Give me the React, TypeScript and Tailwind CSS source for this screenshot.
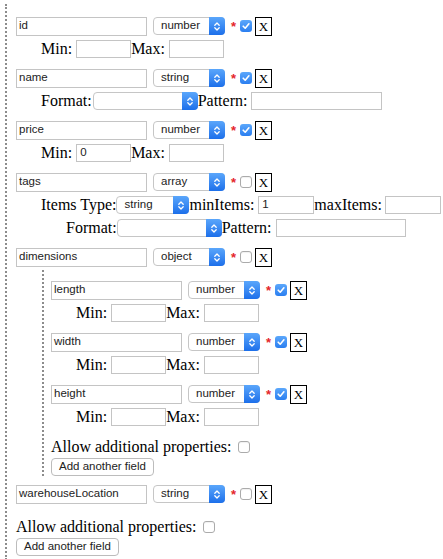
import React from "react";

const sans = "font-['Liberation_Sans',Arial,sans-serif]";

function TextBox({ value = "", w }: { value?: string; w: string }) {
  return (
    <div
      className={`${w} h-[19px] shrink-0 border border-[#c4c4c4] bg-white pl-[2px] flex items-center text-[11.5px] text-[#222] leading-none ${sans}`}
    >
      {value}
    </div>
  );
}

function SmallBox({ value = "", w }: { value?: string; w: string }) {
  return (
    <div
      className={`${w} h-[18px] shrink-0 border border-[#c4c4c4] bg-white pl-[3px] flex items-center text-[11.5px] text-[#222] leading-none ${sans}`}
    >
      {value}
    </div>
  );
}

function Select({ value = "", w, className = "" }: { value?: string; w: string; className?: string }) {
  return (
    <div
      className={`relative ${w} h-[18px] shrink-0 rounded-[4px] border border-[#c6c6c6] bg-white flex items-center text-[11.5px] text-[#222] leading-none ${sans} ${className}`}
    >
      <span className="pl-[7px]">{value}</span>
      <div className="absolute right-[-1px] top-[-1px] bottom-[-1px] w-[16px] rounded-r-[4px] bg-gradient-to-b from-[#5aa6fb] to-[#1c6fea] flex items-center justify-center">
        <svg width="8" height="11" viewBox="0 0 8 11" fill="none">
          <path d="M1.8 4.2 L4 2 L6.2 4.2" stroke="white" strokeWidth="1.3" strokeLinecap="round" strokeLinejoin="round" />
          <path d="M1.8 6.8 L4 9 L6.2 6.8" stroke="white" strokeWidth="1.3" strokeLinecap="round" strokeLinejoin="round" />
        </svg>
      </div>
    </div>
  );
}

function Check({ checked, className = "" }: { checked: boolean; className?: string }) {
  if (checked) {
    return (
      <div
        className={`w-[12px] h-[12px] shrink-0 rounded-[3px] bg-gradient-to-b from-[#5ba7fb] to-[#2a7ef0] flex items-center justify-center ${className}`}
      >
        <svg width="10" height="10" viewBox="0 0 10 10" fill="none">
          <path d="M2.2 5.2 L4.2 7.2 L7.9 2.8" stroke="white" strokeWidth="1.6" strokeLinecap="round" strokeLinejoin="round" />
        </svg>
      </div>
    );
  }
  return (
    <div
      className={`w-[12px] h-[12px] shrink-0 rounded-[3px] border border-[#ababab] bg-white shadow-[inset_0_1px_1px_rgba(0,0,0,0.06)] ${className}`}
    />
  );
}

function FieldRow({ name, type, required }: { name: string; type: string; required: boolean }) {
  return (
    <div className="flex items-center h-[20px]">
      <TextBox value={name} w="w-[131px]" />
      <Select value={type} w="w-[72px]" className="ml-[6px]" />
      <span className={`ml-[6px] self-start mt-[4px] text-[13px] font-bold leading-none text-[#e4262b] ${sans}`}>*</span>
      <Check checked={required} className="ml-[4px]" />
      <div className="ml-[3px] w-[17px] h-[19px] shrink-0 border border-black flex items-center justify-center text-[13px] leading-none pt-[1px]">
        X
      </div>
    </div>
  );
}

function MinMax({ min = "" }: { min?: string }) {
  return (
    <div className="flex items-center h-[20px] mt-[3px] pl-[25px] whitespace-nowrap">
      <span>Min:</span>
      <SmallBox value={min} w="w-[55px] ml-[4px]" />
      <span>Max:</span>
      <SmallBox w="w-[55px] ml-[4px]" />
    </div>
  );
}

function AllowAndAdd({ topClass }: { topClass: string }) {
  return (
    <>
      <div className={`flex items-center h-[19px] whitespace-nowrap ${topClass}`}>
        <span>Allow additional properties:</span>
        <Check checked={false} className="ml-[7px]" />
      </div>
      <div className="flex mt-[2px]">
        <div
          className={`h-[18px] px-[7px] rounded-[4px] border border-[#bcbcbc] bg-white flex items-center text-[11.5px] text-[#222] leading-none ${sans}`}
        >
          Add another field
        </div>
      </div>
    </>
  );
}

export default function App() {
  return (
    <div className="w-[443px] h-[559px] overflow-hidden bg-white text-black text-[16px] font-['Liberation_Serif','Times_New_Roman',serif]">
      <div className="ml-[5px] mt-[4px] border-l-2 border-dotted border-[#8c8c8c] pl-[9px] pt-[12px] pb-[4px]">
        {/* id */}
        <div className="mb-[9px]">
          <FieldRow name="id" type="number" required />
          <MinMax />
        </div>
        {/* name */}
        <div className="mb-[9px]">
          <FieldRow name="name" type="string" required />
          <div className="flex items-center h-[20px] mt-[3px] pl-[25px] whitespace-nowrap">
            <span>Format:</span>
            <Select w="w-[105px]" className="ml-[1px]" />
            <span>Pattern:</span>
            <SmallBox w="w-[131px] ml-[4px]" />
          </div>
        </div>
        {/* price */}
        <div className="mb-[9px]">
          <FieldRow name="price" type="number" required />
          <MinMax min="0" />
        </div>
        {/* tags */}
        <div className="mb-[9px]">
          <FieldRow name="tags" type="array" required={false} />
          <div className="flex items-center h-[20px] mt-[3px] pl-[25px] whitespace-nowrap">
            <span>Items Type:</span>
            <Select value="string" w="w-[73px]" />
            <span>minItems:</span>
            <SmallBox value="1" w="w-[56px] ml-[4px]" />
            <span>maxItems:</span>
            <SmallBox w="w-[56px] ml-[3px]" />
          </div>
          <div className="flex items-center h-[20px] mt-[3px] pl-[50px] whitespace-nowrap">
            <span>Format:</span>
            <Select w="w-[105px]" />
            <span>Pattern:</span>
            <SmallBox w="w-[130px] ml-[5px]" />
          </div>
        </div>
        {/* dimensions */}
        <div className="mb-[8px]">
          <FieldRow name="dimensions" type="object" required={false} />
          <div className="mt-[3px] ml-[26px] border-l-2 border-dotted border-[#8c8c8c] pl-[7px] pt-[10px]">
            <div className="mb-[9px]">
              <FieldRow name="length" type="number" required />
              <MinMax />
            </div>
            <div className="mb-[9px]">
              <FieldRow name="width" type="number" required />
              <MinMax />
            </div>
            <div>
              <FieldRow name="height" type="number" required />
              <MinMax />
            </div>
            <AllowAndAdd topClass="mt-[10px]" />
          </div>
        </div>
        {/* warehouseLocation */}
        <div>
          <FieldRow name="warehouseLocation" type="string" required={false} />
        </div>
        <AllowAndAdd topClass="mt-[13px]" />
      </div>
    </div>
  );
}
